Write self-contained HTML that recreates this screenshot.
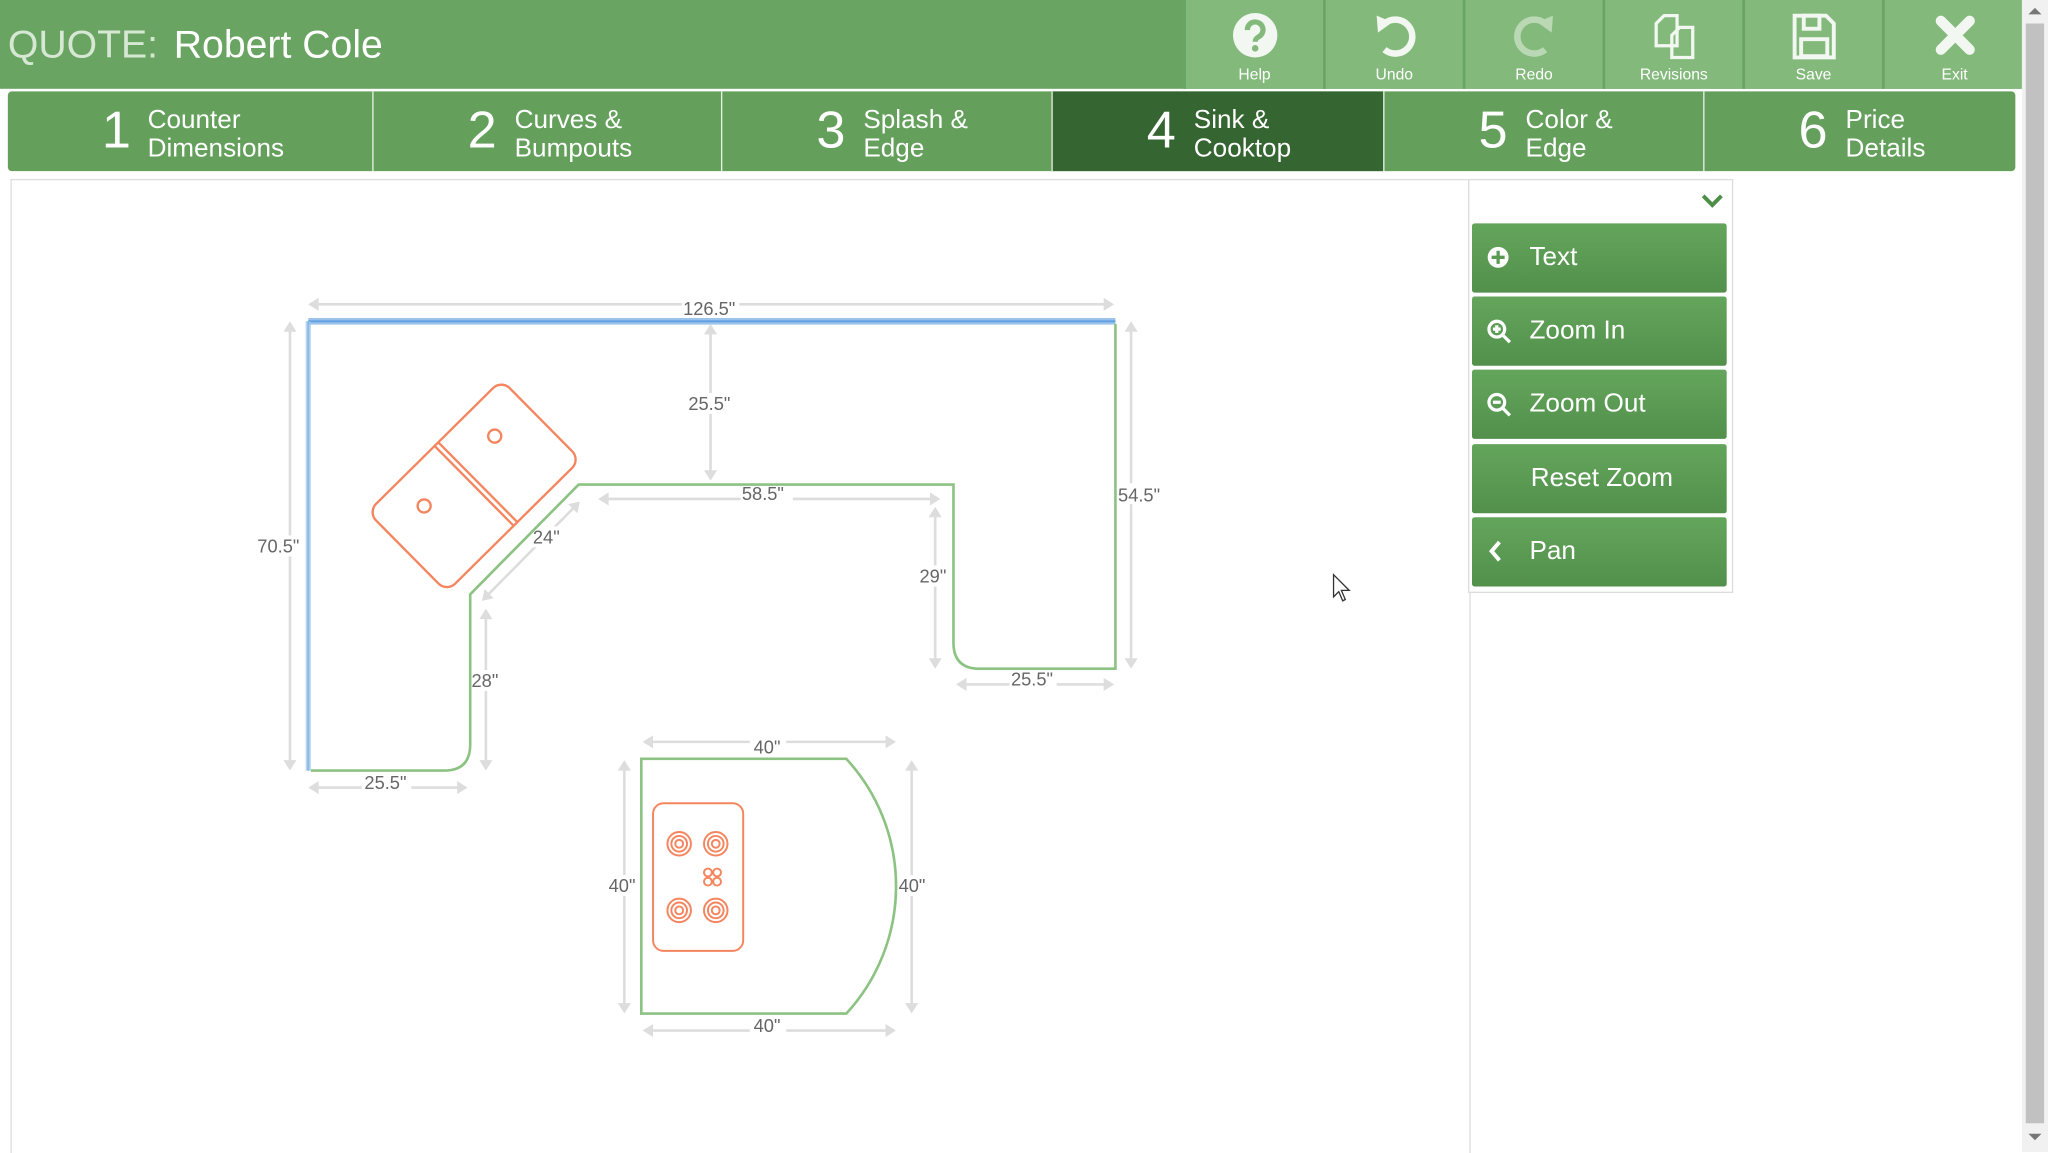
<!DOCTYPE html>
<html><head><meta charset="utf-8"><style>
html,body{margin:0;padding:0;width:2048px;height:1152px;overflow:hidden;background:#fff;font-family:"Liberation Sans",sans-serif}
#w{position:absolute;left:0;top:0;width:1568px;height:882px;transform:scale(1.306122);transform-origin:0 0}
.hdr{position:absolute;left:0;top:0;width:1548px;height:68px;background:#6aa463}
.title{position:absolute;left:6px;top:18px;font-size:30px;color:#fff;white-space:nowrap}
.title span{color:#d6e8d3;margin-right:12px}
.tb{position:absolute;top:0;height:68px;width:105px;background:#83b97b;border-left:2px solid #6aa463;color:#fff;text-align:center;font-size:12px}
.tb svg{display:block;margin:9px auto 0}
.tb div{position:absolute;bottom:4px;width:100%}
.tabs{position:absolute;left:6px;top:70px;width:1537px;height:61px;background:#64a05c;border-radius:3px}
.tab{position:absolute;top:0;height:61px;color:#fff;border-left:1px solid #e8f2e6}
.tab .n{position:absolute;font-size:40px;top:8px}
.tab .t{position:absolute;font-size:20px;line-height:22px;top:11px}
.sb{position:absolute;left:1548px;top:0;width:20px;height:882px;background:#f1f1f1}
.panel{position:absolute;left:1124px;top:137px;width:201px;height:315px;border:1px solid #dcdcdc;background:#fff}
.btn{position:absolute;left:2px;width:195px;height:53px;background:linear-gradient(#64a55c,#52904b);border-radius:2px;color:#fff;font-size:20px}
.btn span{position:absolute;left:44px;top:15px}
.btn svg{position:absolute;left:11px;top:17px}
</style></head><body><div id="w">
<div class="hdr"><div class="title"><span>QUOTE:</span>Robert Cole</div></div>
<div class="tb" style="left:906px"><svg width="36" height="36" viewBox="0 0 36 36"><circle cx="18" cy="18" r="17" fill="#f2f7f1"/><path d="M12 14a6 6 0 1 1 9 5c-2 1-3 2-3 4" stroke="#83b97b" stroke-width="4" fill="none"/><circle cx="18" cy="28" r="2.5" fill="#83b97b"/></svg><div>Help</div></div>
<div class="tb" style="left:1013px"><svg width="36" height="36" viewBox="0 0 36 36"><path d="M10 9A13 13 0 1 1 10 29" stroke="#f2f7f1" stroke-width="5" fill="none"/><path d="M4 3l1 13 11-8z" fill="#f2f7f1"/></svg><div>Undo</div></div>
<div class="tb" style="left:1120px"><svg width="36" height="36" viewBox="0 0 36 36"><path d="M26 9A13 13 0 1 0 26 29" stroke="#b9d8b3" stroke-width="5" fill="none"/><path d="M32 3l-1 13-11-8z" fill="#b9d8b3"/></svg><div>Redo</div></div>
<div class="tb" style="left:1227px"><svg width="40" height="38" viewBox="0 0 40 38"><path d="M6 26V9l6-6h10v23z M18 35V18l6-6h10v23z" stroke="#f2f7f1" stroke-width="2.5" fill="none"/></svg><div>Revisions</div></div>
<div class="tb" style="left:1334px"><svg width="36" height="38" viewBox="0 0 36 38"><path d="M3 3h24l6 6v26H3z" stroke="#f2f7f1" stroke-width="3" fill="none"/><rect x="10" y="3" width="12" height="10" stroke="#f2f7f1" stroke-width="3" fill="none"/><rect x="8" y="21" width="20" height="13" stroke="#f2f7f1" stroke-width="3" fill="none"/></svg><div>Save</div></div>
<div class="tb" style="left:1441px;width:107px"><svg width="36" height="36" viewBox="0 0 36 36"><path d="M7 7l22 22M29 7L7 29" stroke="#f2f7f1" stroke-width="8" stroke-linecap="round"/></svg><div>Exit</div></div>
<div class="tabs">
<div class="tab" style="left:0;width:279px;border:none"><div class="n" style="left:72px">1</div><div class="t" style="left:107px">Counter<br>Dimensions</div></div>
<div class="tab" style="left:279px;width:266px"><div class="n" style="left:72px">2</div><div class="t" style="left:108px">Curves &amp;<br>Bumpouts</div></div>
<div class="tab" style="left:546px;width:252px"><div class="n" style="left:72px">3</div><div class="t" style="left:108px">Splash &amp;<br>Edge</div></div>
<div class="tab" style="left:799px;width:253px;background:#356530"><div class="n" style="left:72px">4</div><div class="t" style="left:108px">Sink &amp;<br>Cooktop</div></div>
<div class="tab" style="left:1053px;width:245px"><div class="n" style="left:72px">5</div><div class="t" style="left:108px">Color &amp;<br>Edge</div></div>
<div class="tab" style="left:1298px;width:239px"><div class="n" style="left:72px">6</div><div class="t" style="left:108px">Price<br>Details</div></div>
</div>
<div style="position:absolute;left:8px;top:137px;width:1116px;height:745px;border-left:1px solid #ddd;border-top:1px solid #ddd;border-right:1px solid #ddd"></div>
<svg style="position:absolute;left:0;top:0" width="1548" height="882" font-family="Liberation Sans" font-size="14" fill="#666">
<g stroke="#ddd" stroke-width="2" fill="none">
<path d="M238 233H851M222 248V588M544 250V366M462 382H716M866 248V510M716 392V508M372 457L441 387M372 470V588M238 603H356M734 524H851M494 568H684M478 584V774M698 584V774M494 789H684"/>
</g>
<g fill="#ddd">
<path d="M236 233l8-5v10zM853 233l-8-5v10zM222 246l-5 8h10zM222 590l-5-8h10zM544 248l-5 8h10zM544 368l-5-8h10zM458 382l8-5v10zM720 382l-8-5v10zM866 246l-5 8h10zM866 512l-5-8h10zM716 388l-5 8h10zM716 512l-5-8h10zM372 466l-5 8h10zM372 590l-5-8h10zM236 603l8-5v10zM358 603l-8-5v10zM732 524l8-5v10zM853 524l-8-5v10zM492 568l8-5v10zM686 568l-8-5v10zM478 582l-5 8h10zM478 776l-5-8h10zM698 582l-5 8h10zM698 776l-5-8h10zM492 789l8-5v10zM686 789l-8-5v10zM369 460l2-9 7 7zM444 384l-2 9-7-7z"/>
</g>
<g stroke="#fff" stroke-width="16"><path d="M522 236h44M528 309h34M567 378h40M195 418h38M406 411h28M703 441h26M360 521h26M277 599h38M773 520h36M574 572h28M464 678h26M686 678h26M574 785h28M854 378h36"/></g>
<text x="523" y="241">126.5"</text><text x="527" y="314">25.5"</text><text x="568" y="383">58.5"</text><text x="856" y="384">54.5"</text><text x="197" y="423">70.5"</text><text x="408" y="416">24"</text><text x="704" y="446">29"</text><text x="361" y="526">28"</text><text x="279" y="604">25.5"</text><text x="774" y="525">25.5"</text><text x="577" y="577">40"</text><text x="466" y="683">40"</text><text x="688" y="683">40"</text><text x="577" y="790">40"</text>
<path d="M236 246H854" stroke="#9cc4ea" stroke-width="5"/><path d="M236 246H854M236 246V590" stroke="#5b9fe0" stroke-width="1.5"/><path d="M236 246V590" stroke="#9cc4ea" stroke-width="4" opacity=".7"/>
<path d="M854 248V512H750Q730 512 730 492V371H443L360 455V570Q360 590 340 590H238" stroke="#8cc282" stroke-width="2" fill="none"/>
<g transform="translate(363 372) rotate(-44.7)" stroke="#f4855e" stroke-width="1.8" fill="none">
<rect x="-72" y="-43" width="144" height="86" rx="9"/><path d="M0 -43V43M4 -43V43"/><circle cx="-38" cy="-16" r="5"/><circle cx="38" cy="-16" r="5"/>
</g>
<path d="M491 581H648A144 144 0 0 1 648 776H491Z" stroke="#8cc282" stroke-width="2" fill="none"/>
<g stroke="#f4855e" stroke-width="1.5" fill="none">
<rect x="500" y="615" width="69" height="113" rx="8"/>
<g id="b"><circle cx="520" cy="646" r="9"/><circle cx="520" cy="646" r="6"/><circle cx="520" cy="646" r="3"/></g>
<use href="#b" x="28"/><use href="#b" y="51"/><use href="#b" x="28" y="51"/>
<circle cx="542" cy="668" r="3"/><circle cx="549" cy="668" r="3"/><circle cx="542" cy="675" r="3"/><circle cx="549" cy="675" r="3"/>
</g>
<path d="M1021 440v17l4-4 3 7 2-1-3-7h6z" fill="#fff" stroke="#333" stroke-width="1"/>
</svg>
<div class="panel">
<svg style="position:absolute;left:177px;top:10px" width="18" height="12"><path d="M2 2l7 7 7-7" stroke="#4d8f46" stroke-width="3" fill="none"/></svg>
<div class="btn" style="top:33px"><svg width="18" height="18"><circle cx="9" cy="9" r="8" fill="#fff"/><path d="M9 4v10M4 9h10" stroke="#5a9a52" stroke-width="2.5"/></svg><span>Text</span></div>
<div class="btn" style="top:89px"><svg width="20" height="20"><circle cx="8" cy="8" r="6" stroke="#fff" stroke-width="2.5" fill="none"/><path d="M12 12l6 6M5 8h6M8 5v6" stroke="#fff" stroke-width="2.5"/></svg><span>Zoom In</span></div>
<div class="btn" style="top:145px"><svg width="20" height="20"><circle cx="8" cy="8" r="6" stroke="#fff" stroke-width="2.5" fill="none"/><path d="M12 12l6 6M5 8h6" stroke="#fff" stroke-width="2.5"/></svg><span>Zoom Out</span></div>
<div class="btn" style="top:202px"><span style="left:45px">Reset Zoom</span></div>
<div class="btn" style="top:258px"><svg width="14" height="18"><path d="M10 2L4 9l6 7" stroke="#fff" stroke-width="3" fill="none"/></svg><span>Pan</span></div>
</div>
<div class="sb"><div style="position:absolute;left:3px;top:18px;width:14px;height:842px;background:#c1c1c1"></div><div style="position:absolute;left:5px;top:6px;border:5px solid transparent;border-bottom-color:#777;border-top:0"></div><div style="position:absolute;left:5px;top:868px;border:5px solid transparent;border-top-color:#777;border-bottom:0"></div></div>
</div></body></html>
